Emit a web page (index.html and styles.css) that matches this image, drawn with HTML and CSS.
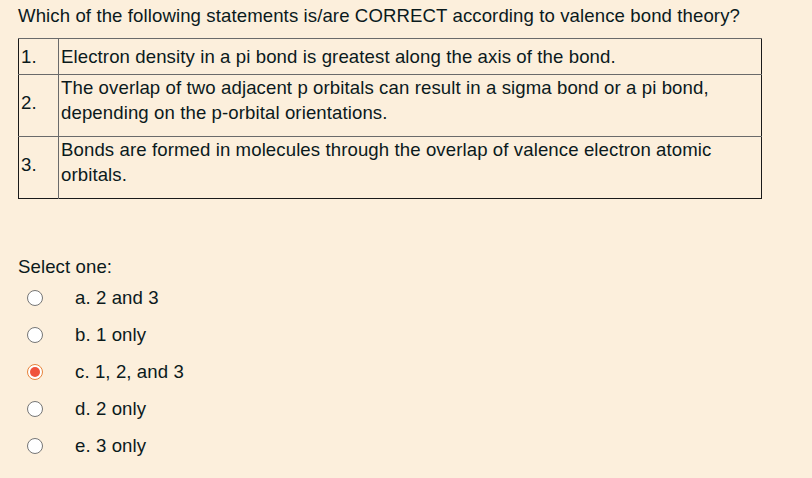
FILE: index.html
```html
<!DOCTYPE html>
<html>
<head>
<meta charset="utf-8">
<link rel="stylesheet" href="styles.css">
</head>
<body>
<div class="question">
  <p class="qtext">Which of the following statements is/are CORRECT according to valence bond theory?</p>
  <table class="stmts">
    <tr><td class="num">1.</td><td class="txt">Electron density in a pi bond is greatest along the axis of the bond.</td></tr>
    <tr><td class="num">2.</td><td class="txt">The overlap of two adjacent p orbitals can result in a sigma bond or a pi bond,<br>depending on the p-orbital orientations.</td></tr>
    <tr><td class="num">3.</td><td class="txt">Bonds are formed in molecules through the overlap of valence electron atomic<br>orbitals.</td></tr>
  </table>
  <div class="prompt">Select one:</div>
  <div class="answers">
    <div class="opt"><span class="radio"></span><span class="label">a. 2 and 3</span></div>
    <div class="opt"><span class="radio"></span><span class="label">b. 1 only</span></div>
    <div class="opt"><span class="radio checked"></span><span class="label">c. 1, 2, and 3</span></div>
    <div class="opt"><span class="radio"></span><span class="label">d. 2 only</span></div>
    <div class="opt"><span class="radio"></span><span class="label">e. 3 only</span></div>
  </div>
</div>
</body>
</html>
```
FILE: styles.css
```css
html, body {
  margin: 0;
  padding: 0;
  background: #fcefdc;
}
body {
  font-family: "Liberation Sans", Arial, sans-serif;
  font-size: 18.6px;
  letter-spacing: 0.1px;
  color: #0b1a1c;
}
.question {
  padding: 3px 18px 0 18px;
}
.qtext {
  margin: 0;
  line-height: 25px;
}
.stmts {
  margin-top: 10px;
  border-collapse: collapse;
  border: 1px solid #1a1a1a;
  width: 744px;
}
.stmts td {
  border-top: 1px solid #6a6a6a;
  padding: 0 2px;
  line-height: 25px;
  vertical-align: middle;
}
.stmts td.num {
  width: 35px;
  border-right: 1px solid #6a6a6a;
}
.stmts tr:first-child td {
  height: 35px;
}
.stmts tr + tr td {
  height: 61px;
  vertical-align: top;
  padding-top: 0;
}
.stmts tr + tr td.num {
  vertical-align: middle;
  padding-bottom: 6px;
  height: 55px;
}
.prompt {
  margin-top: 55px;
  line-height: 25px;
}
.answers {
  margin-top: 6px;
  display: flex;
  flex-direction: column;
  gap: 12px;
}
.opt {
  display: flex;
  align-items: center;
  height: 25px;
}
.radio {
  box-sizing: border-box;
  width: 16px;
  height: 16px;
  border-radius: 50%;
  border: 1px solid #767676;
  background: #fff;
  margin-left: 9px;
  margin-right: 32px;
  position: relative;
}
.radio.checked {
  border: 1px solid #e8833a;
}
.radio.checked::after {
  content: "";
  position: absolute;
  left: 2px;
  top: 2px;
  width: 10px;
  height: 10px;
  border-radius: 50%;
  background: #f0533c;
}
.label {
  line-height: 25px;
}
```
